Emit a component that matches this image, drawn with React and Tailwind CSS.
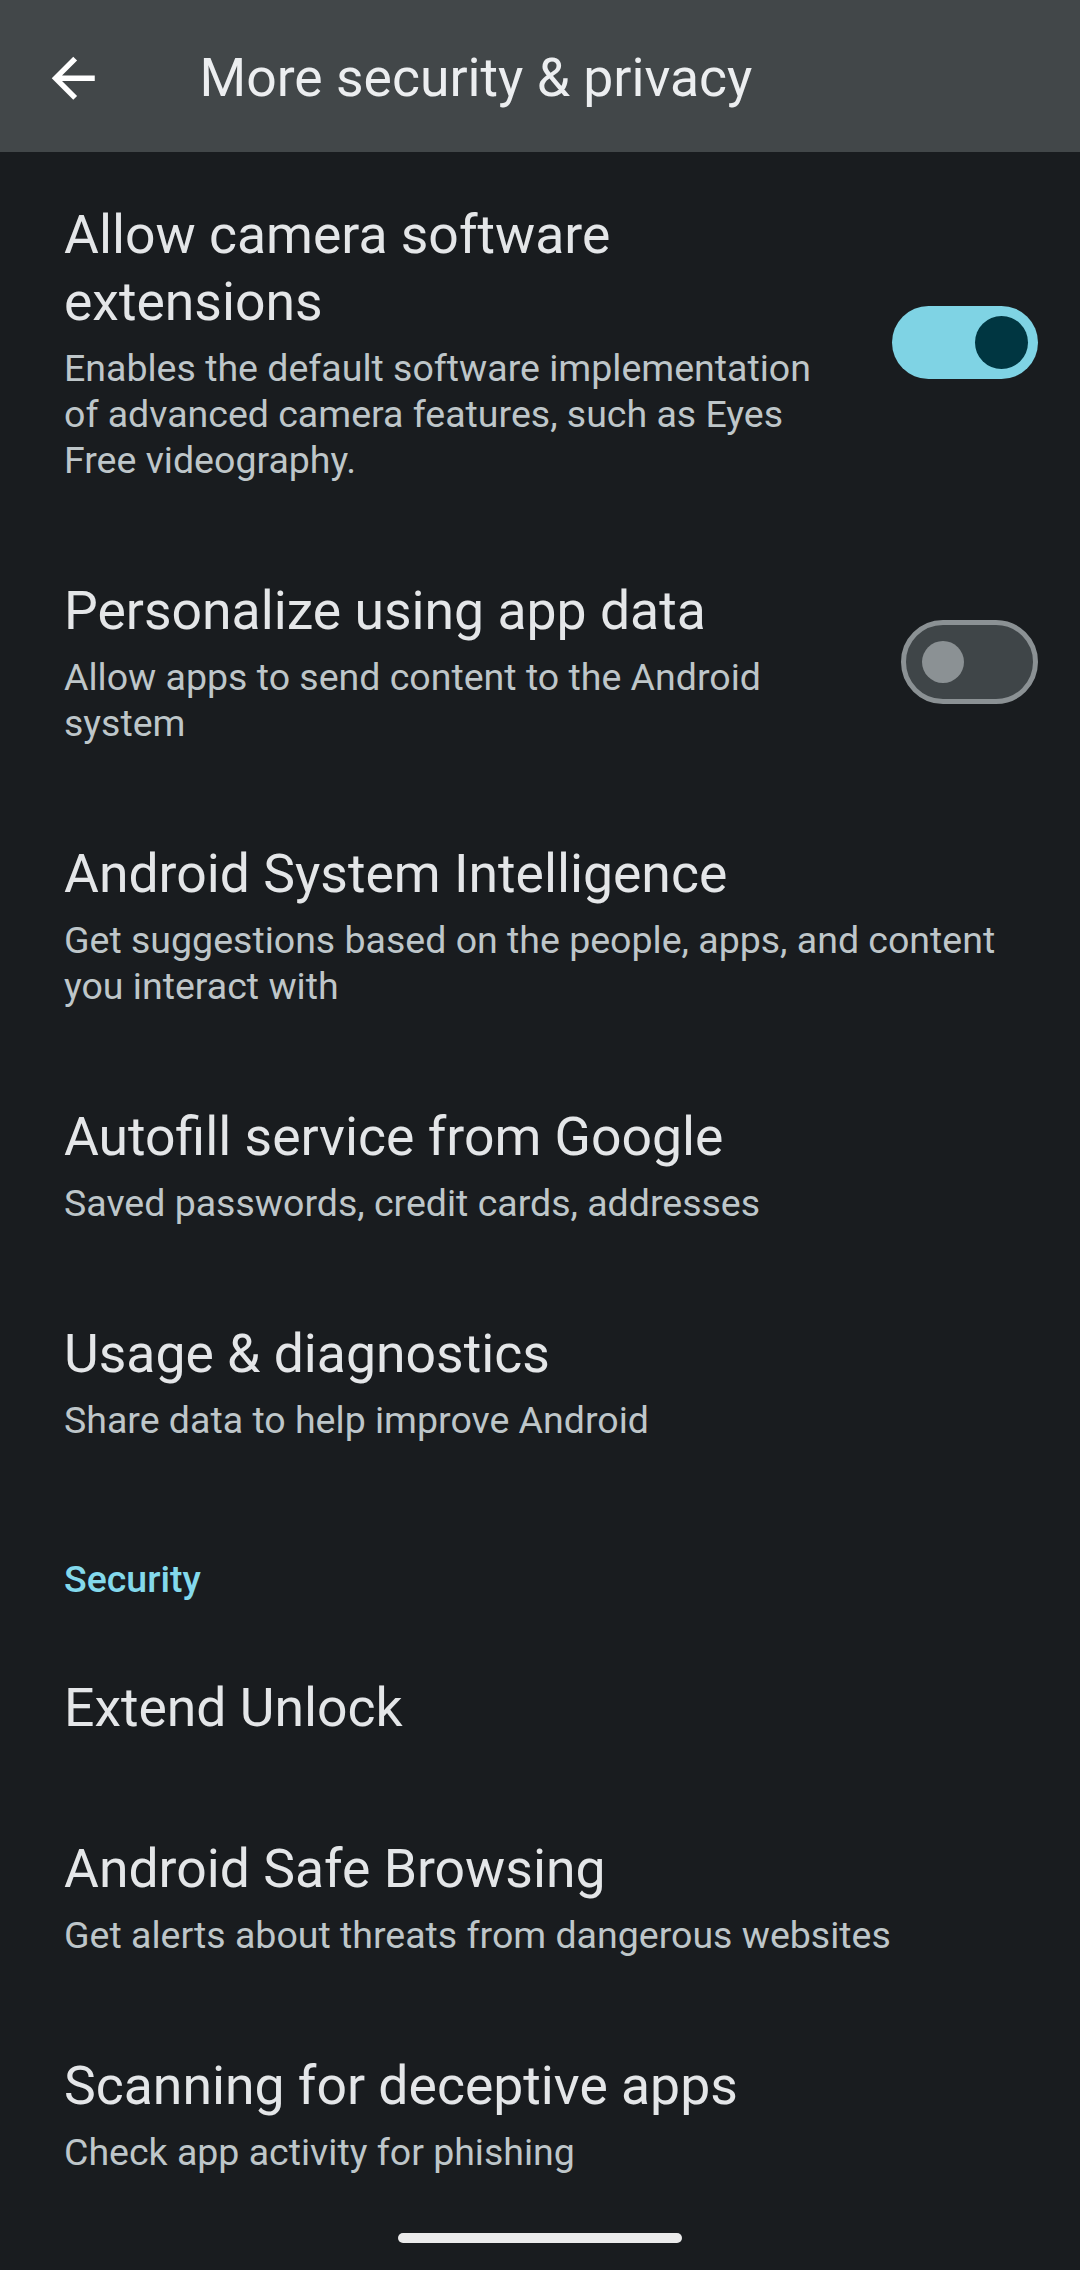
import React from "react";

const font = { fontFamily: "Roboto, 'Noto Sans', sans-serif" };

function Item({ title, summary, toggle }) {
  return (
    <div className="flex items-center pl-[64px] pr-[42px] py-[47px]">
      <div className={toggle ? "flex-1 min-w-0 pr-[48px]" : "flex-1 min-w-0"}>
        <div className="text-[53.5px] leading-[67px] text-[#e4e6e8]">{title}</div>
        {summary && (
          <div className="mt-[10px] text-[37.5px] leading-[46px] text-[#bec6c9]">{summary}</div>
        )}
      </div>
      {toggle === "on" && (
        <div className="w-[146px] h-[73px] rounded-full bg-[#7fd3e4] flex items-center justify-end pr-[10px]">
          <div className="w-[53px] h-[53px] rounded-full bg-[#003641]" />
        </div>
      )}
      {toggle === "off" && (
        <div className="w-[146px] flex justify-end">
          <div className="w-[137px] h-[84px] rounded-full bg-[#3f4548] border-[5px] border-[#8b9194] flex items-center pl-[16px]">
            <div className="w-[42px] h-[42px] rounded-full bg-[#8b9194]" />
          </div>
        </div>
      )}
    </div>
  );
}

export default function App() {
  return (
    <div className="relative w-[1080px] h-[2270px] bg-[#191c1f] overflow-hidden" style={font}>
      <div className="h-[152px] bg-[#424749] flex items-center pt-[4px]">
        <div className="pl-[41px]">
          <svg width="64.5" height="64.5" viewBox="0 -960 960 960" fill="#ffffff">
            <path d="m313-440 224 224-57 56-320-320 320-320 57 56-224 224h487v80H313Z" />
          </svg>
        </div>
        <div className="ml-[94px] text-[53.5px] text-[#eceef0]">More security &amp; privacy</div>
      </div>

      <div className="pt-[2px]">
        <Item
          title="Allow camera software extensions"
          summary="Enables the default software implementation of advanced camera features, such as Eyes Free videography."
          toggle="on"
        />
        <Item
          title="Personalize using app data"
          summary="Allow apps to send content to the Android system"
          toggle="off"
        />
        <Item
          title="Android System Intelligence"
          summary="Get suggestions based on the people, apps, and content you interact with"
        />
        <Item title="Autofill service from Google" summary="Saved passwords, credit cards, addresses" />
        <Item title="Usage & diagnostics" summary="Share data to help improve Android" />

        <div className="pl-[64px] pt-[66px] pb-[25px] text-[37.5px] leading-[46px] font-medium text-[#83d9ec]">
          Security
        </div>

        <Item title="Extend Unlock" />
        <Item title="Android Safe Browsing" summary="Get alerts about threats from dangerous websites" />
        <Item title="Scanning for deceptive apps" summary="Check app activity for phishing" />
      </div>

      <div className="absolute left-[398px] top-[2233px] w-[284px] h-[10px] rounded-full bg-[#ebebeb]" />
    </div>
  );
}
